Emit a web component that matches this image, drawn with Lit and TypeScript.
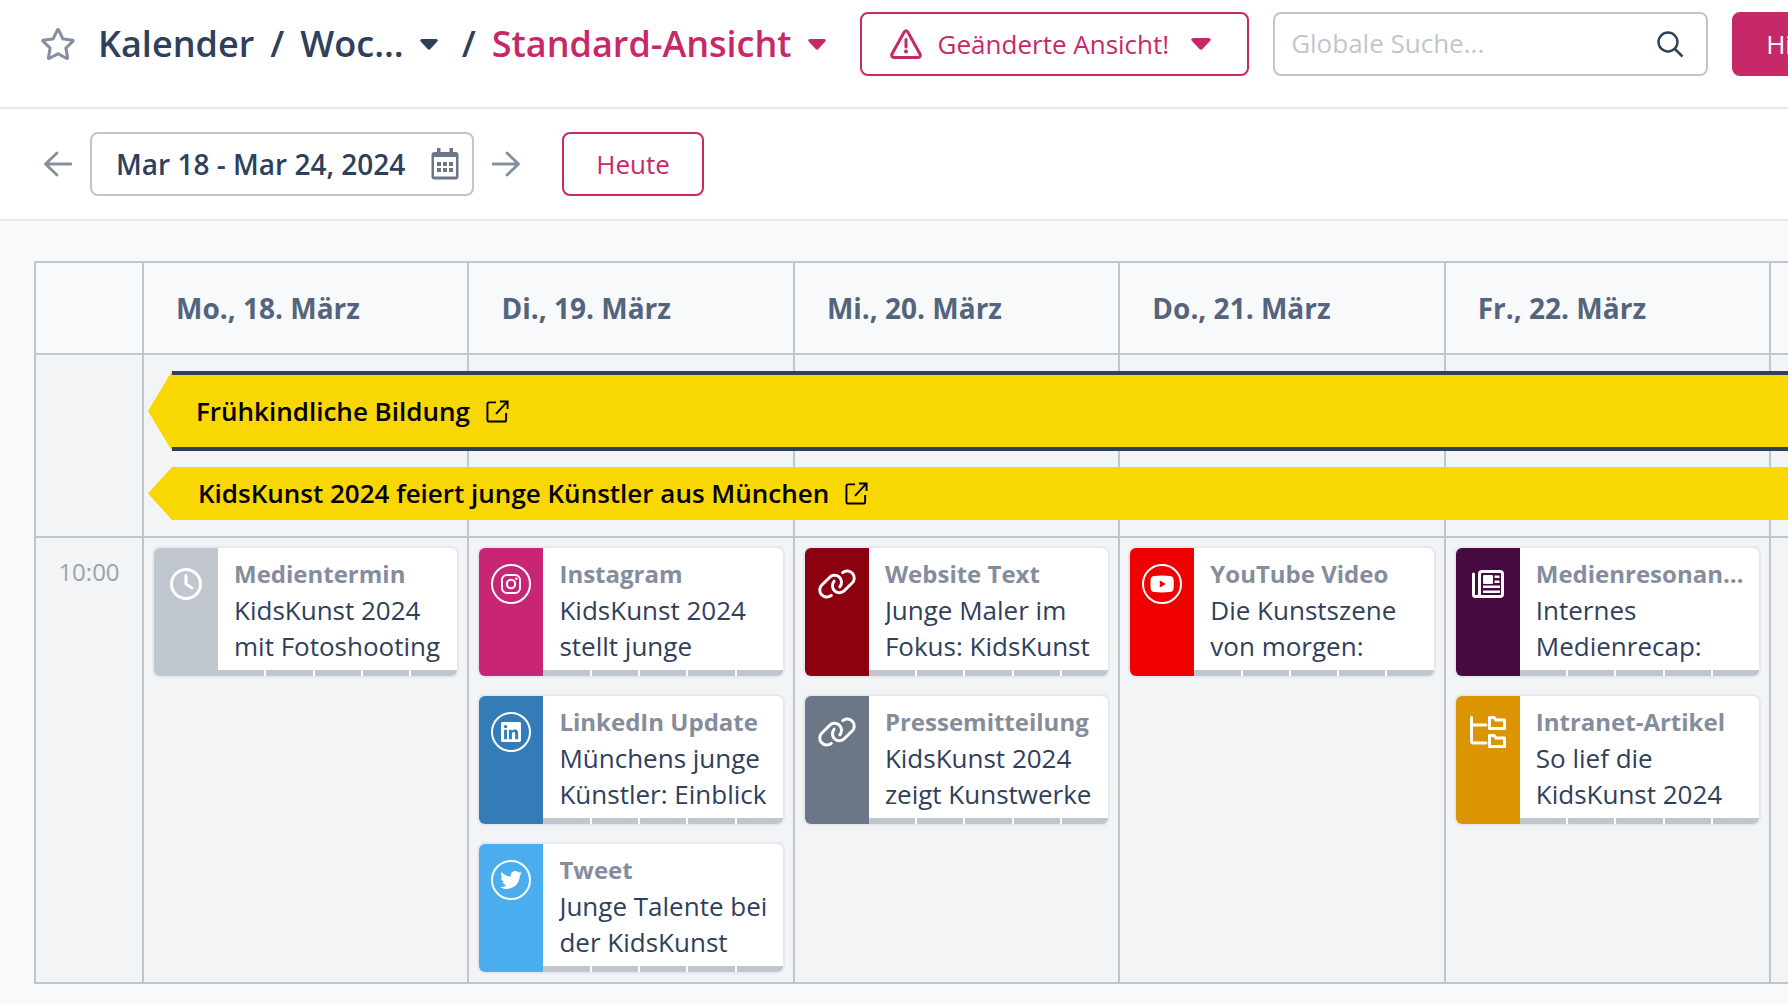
import { LitElement, html, css, svg, type TemplateResult, type SVGTemplateResult } from "lit";
import { customElement, property } from "lit/decorators.js";
import { classMap } from "lit/directives/class-map.js";

type Kind =
  | "clock"
  | "instagram"
  | "linkedin"
  | "twitter"
  | "link"
  | "youtube"
  | "news"
  | "tree";

interface Entry {
  tone: string;
  icon: Kind;
  channel: string;
  title: string;
}

interface Day {
  label: string;
  entries: Entry[];
}

interface Campaign {
  title: string;
  framed: boolean;
}

const days: Day[] = [
  {
    label: "Mo., 18. März",
    entries: [
      { tone: "grey", icon: "clock", channel: "Medientermin", title: "KidsKunst 2024 mit Fotoshooting" },
    ],
  },
  {
    label: "Di., 19. März",
    entries: [
      { tone: "pink", icon: "instagram", channel: "Instagram", title: "KidsKunst 2024 stellt junge" },
      { tone: "blue", icon: "linkedin", channel: "LinkedIn Update", title: "Münchens junge Künstler: Einblick" },
      { tone: "sky", icon: "twitter", channel: "Tweet", title: "Junge Talente bei der KidsKunst" },
    ],
  },
  {
    label: "Mi., 20. März",
    entries: [
      { tone: "wine", icon: "link", channel: "Website Text", title: "Junge Maler im Fokus: KidsKunst" },
      { tone: "slate", icon: "link", channel: "Pressemitteilung", title: "KidsKunst 2024 zeigt Kunstwerke" },
    ],
  },
  {
    label: "Do., 21. März",
    entries: [
      { tone: "red", icon: "youtube", channel: "YouTube Video", title: "Die Kunstszene von morgen:" },
    ],
  },
  {
    label: "Fr., 22. März",
    entries: [
      { tone: "plum", icon: "news", channel: "Medienresonanzanalyse", title: "Internes Medienrecap:" },
      { tone: "amber", icon: "tree", channel: "Intranet-Artikel", title: "So lief die KidsKunst 2024" },
    ],
  },
  { label: "Sa., 23. März", entries: [] },
  { label: "So., 24. März", entries: [] },
];

const campaigns: Campaign[] = [
  { title: "Frühkindliche Bildung", framed: true },
  { title: "KidsKunst 2024 feiert junge Künstler aus München", framed: false },
];

const ring = svg`<circle cx="20" cy="20" r="19" fill="none" stroke="currentColor" stroke-width="2"/>`;

const glyphs: Record<Kind, SVGTemplateResult> = {
  clock: svg`
    <circle cx="20" cy="20" r="14.5" fill="none" stroke="currentColor" stroke-width="3"/>
    <path d="M20 11.5V20l6 4" fill="none" stroke="currentColor" stroke-width="3" stroke-linecap="round" stroke-linejoin="round"/>`,
  instagram: svg`${ring}
    <rect x="11" y="11" width="18" height="18" rx="5" fill="none" stroke="currentColor" stroke-width="2"/>
    <circle cx="20" cy="20" r="4.2" fill="none" stroke="currentColor" stroke-width="2"/>
    <circle cx="25.3" cy="14.7" r="1.3" fill="currentColor"/>`,
  linkedin: svg`${ring}
    <path transform="translate(10 8.6) scale(.04464)" fill="currentColor" d="M416 32H31.9C14.3 32 0 46.5 0 64.3v383.4C0 465.5 14.3 480 31.9 480H416c17.6 0 32-14.5 32-32.3V64.3c0-17.8-14.4-32.3-32-32.3zM135.4 416H69V202.2h66.5V416zm-33.2-243c-21.3 0-38.5-17.3-38.5-38.5S80.9 96 102.2 96c21.2 0 38.5 17.3 38.5 38.5 0 21.3-17.2 38.5-38.5 38.5zm282.1 243h-66.4V312c0-24.8-.5-56.7-34.5-56.7-34.6 0-39.9 27-39.9 54.9V416h-66.4V202.2h63.7v29.2h.9c8.9-16.8 30.6-34.5 62.9-34.5 67.2 0 79.7 44.3 79.7 101.9V416z"/>`,
  twitter: svg`${ring}
    <path transform="translate(9 9) scale(.04297)" fill="currentColor" d="M459.37 151.716c.325 4.548.325 9.097.325 13.645 0 138.72-105.583 298.558-298.558 298.558-59.452 0-114.68-17.219-161.137-47.106 8.447.974 16.568 1.299 25.34 1.299 49.055 0 94.213-16.568 130.274-44.832-46.132-.975-84.792-31.188-98.112-72.772 6.498.974 12.995 1.624 19.818 1.624 9.421 0 18.843-1.3 27.614-3.573-48.081-9.747-84.143-51.98-84.143-102.985v-1.299c13.969 7.797 30.214 12.67 47.431 13.319-28.264-18.843-46.781-51.005-46.781-87.391 0-19.492 5.197-37.36 14.294-52.954 51.655 63.675 129.3 105.258 216.365 109.807-1.624-7.797-2.599-15.918-2.599-24.04 0-57.828 46.782-104.934 104.934-104.934 30.213 0 57.502 12.67 76.67 33.137 23.715-4.548 46.456-13.32 66.599-25.34-7.798 24.366-24.366 44.833-46.132 57.827 21.117-2.273 41.584-8.122 60.426-16.243-14.292 20.791-32.161 39.308-52.628 54.253z"/>`,
  youtube: svg`${ring}
    <path fill="currentColor" fill-rule="evenodd" d="M12 12Q20 11.2 28 12Q31.2 12.3 31.6 15.5Q32 20 31.6 24.6Q31.2 27.8 28 28.1Q20 28.8 12 28.1Q9 27.8 8.6 24.6Q8.2 20 8.6 15.5Q9 12.3 12 12ZM17.8 16.6V23.4L23.8 20Z"/>`,
  link: svg`
    <g fill="none" stroke="currentColor" stroke-width="48" stroke-linecap="round" transform="translate(0 4) scale(.0625)">
      <path d="M411 74A112 112 0 0 1 556.7 244.7L444.4 356.9A112 112 0 0 1 274 211"/>
      <path d="M229 438A112 112 0 0 1 83.3 267.3L195.6 155.1A112 112 0 0 1 366 301"/>
    </g>`,
  news: svg`
    <path d="M5.5 10V30.5Q5.5 32.5 7.5 32.5H32Q34.5 32.5 34.5 30V10Q34.5 7.5 32 7.5H14Q11.5 7.5 11.5 10V30Q11.5 32.5 9 32.5" fill="none" stroke="currentColor" stroke-width="3" stroke-linecap="round" stroke-linejoin="round"/>
    <path fill="currentColor" d="M16 11h8q1 0 1 1v7q0 1-1 1h-8q-1 0-1-1v-7q0-1 1-1zM26.5 11.5h5v2.5h-5zM26.5 16.5h5v2.5h-5zM15 21.5h17v2.5H15zM15 26.5h17v2.5H15z"/>`,
  tree: svg`
    <path d="M3.5 5.5V29Q3.5 31 5.5 31H18M3.5 13H18" fill="none" stroke="currentColor" stroke-width="3" stroke-linecap="round"/>
    <path d="M21.5 5.5H26L28 8H36.5V16.5H21.5ZM21.5 23.5H26L28 26H36.5V34.5H21.5Z" fill="none" stroke="currentColor" stroke-width="3" stroke-linejoin="round"/>`,
};

const caret = html`<svg class="caret" viewBox="0 0 20 12" aria-hidden="true">
  <path fill="currentColor" d="M2 0H18Q21 1 19 3L11.5 11Q10 12.4 8.5 11L1 3Q-1 1 2 0Z" />
</svg>`;

const external = html`<svg class="external" viewBox="0 0 24 24" aria-hidden="true">
  <path
    d="M10.5 2.5H3.5Q1.5 2.5 1.5 4.5V20.5Q1.5 22.5 3.5 22.5H19Q21 22.5 21 20.5V13.5M14.5 1.5H22.5V9.5M22 2L10.5 14.5"
    fill="none"
    stroke="currentColor"
    stroke-width="2"
  />
</svg>`;

@customElement("calendar-card")
export class CalendarCard extends LitElement {
  @property({ attribute: false }) entry!: Entry;

  static styles = css`
    :host {
      display: block;
    }
    .card {
      display: flex;
      overflow: hidden;
      border: 2px solid #e5e8ee;
      border-radius: 8px;
      background: #fff;
    }
    .strip {
      flex: none;
      width: 64px;
      display: flex;
      justify-content: center;
      padding-top: 16px;
      box-sizing: border-box;
      color: #fff;
    }
    .strip svg {
      width: 40px;
      height: 40px;
    }
    .grey { background: #bfc6ce; }
    .pink { background: #c92575; }
    .blue { background: #347cb8; }
    .sky { background: #4aadee; }
    .wine { background: #8b0110; }
    .slate { background: #6b7686; }
    .red { background: #f00000; }
    .plum { background: #470a40; }
    .amber { background: #dc9502; }
    .main {
      flex: 1;
      min-width: 0;
    }
    .text {
      padding: 8px 12px 6px 16px;
    }
    .channel {
      margin: 0;
      color: #858d9d;
      font-size: 24px;
      font-weight: 700;
      line-height: 36px;
      white-space: nowrap;
      overflow: hidden;
      text-overflow: ellipsis;
    }
    .title {
      margin: 0;
      color: #2f405c;
      font-size: 26px;
      line-height: 36px;
      height: 72px;
      overflow: hidden;
    }
    .steps {
      display: grid;
      grid-template-columns: repeat(5, 1fr);
      gap: 2px;
      height: 6px;
    }
    .step {
      background: #bfc6ce;
    }
  `;

  render() {
    const e = this.entry;
    return html`<article class="card">
      <div class=${classMap({ strip: true, [e.tone]: true })}>
        <svg viewBox="0 0 40 40" aria-hidden="true">${glyphs[e.icon]}</svg>
      </div>
      <div class="main">
        <div class="text">
          <h3 class="channel">${e.channel}</h3>
          <p class="title">${e.title}</p>
        </div>
        <div class="steps">${[0, 1, 2, 3, 4].map(() => html`<span class="step"></span>`)}</div>
      </div>
    </article>`;
  }
}

@customElement("week-table")
export class WeekTable extends LitElement {
  static styles = css`
    :host {
      display: block;
      overflow: hidden;
    }
    .week {
      width: 136.04%;
      table-layout: fixed;
      border-collapse: separate;
      border-spacing: 0;
      border-top: 2px solid #bec6ce;
    }
    .hours {
      width: 108px;
    }
    .cell {
      border-left: 2px solid #bec6ce;
      border-bottom: 2px solid #bec6ce;
      padding: 0;
      vertical-align: top;
      background: #f3f4f6;
      text-align: left;
      font-weight: 400;
    }
    .head {
      background: #f8f9fb;
      padding: 27px 32px;
      color: #54647c;
      font-size: 28px;
      font-weight: 700;
      line-height: 36px;
      white-space: nowrap;
    }
    .hour {
      padding-top: 16px;
      color: #9aa2ae;
      font-size: 24px;
      line-height: 36px;
      text-align: center;
    }
    .campaigns {
      position: relative;
      z-index: 1;
      display: flex;
      flex-direction: column;
      gap: 16px;
      width: 700%;
      padding: 16px 0 16px 4px;
    }
    .bar {
      display: flex;
    }
    .tip {
      width: 24px;
      background: #f8d703;
      clip-path: polygon(100% 0, 0 50%, 100% 100%);
    }
    .body {
      flex: 1;
      display: flex;
      align-items: center;
      padding: 0 26px 1px;
      height: 52px;
      background: #f8d703;
    }
    .framed {
      padding: 0 24px;
      height: 72px;
      border-top: 4px solid #2f405c;
      border-bottom: 4px solid #2f405c;
    }
    .campaign {
      display: flex;
      align-items: center;
      gap: 16px;
      color: #000;
      font-size: 26px;
      font-weight: 600;
      line-height: 36px;
      text-decoration: none;
    }
    .external {
      width: 23px;
      height: 23px;
    }
    .entries {
      display: flex;
      flex-direction: column;
      gap: 16px;
      padding: 8px;
    }
  `;

  private campaign(c: Campaign): TemplateResult {
    return html`<div class="bar">
      <span class="tip"></span>
      <div class=${classMap({ body: true, framed: c.framed })}>
        <a class="campaign" href="#">${c.title}${external}</a>
      </div>
    </div>`;
  }

  render() {
    return html`<table class="week">
      <colgroup>
        <col class="hours" />
        <col span="7" />
      </colgroup>
      <thead>
        <tr>
          <td class="cell head"></td>
          ${days.map((d) => html`<th class="cell head" scope="col">${d.label}</th>`)}
        </tr>
      </thead>
      <tbody>
        <tr>
          <td class="cell"></td>
          ${days.map(
            (_, i) => html`<td class="cell">
              ${i === 0 ? html`<div class="campaigns">${campaigns.map((c) => this.campaign(c))}</div>` : ""}
            </td>`,
          )}
        </tr>
        <tr>
          <th class="cell hour" scope="row">10:00</th>
          ${days.map(
            (d) => html`<td class="cell">
              <div class="entries">
                ${d.entries.map((e) => html`<calendar-card .entry=${e}></calendar-card>`)}
              </div>
            </td>`,
          )}
        </tr>
      </tbody>
    </table>`;
  }
}

@customElement("app-root")
export class AppRoot extends LitElement {
  static styles = css`
    :host {
      display: block;
      min-height: 100vh;
      overflow: hidden;
      box-sizing: border-box;
      background: #f8f9fb;
      color: #2f405c;
      font-family: "Open Sans", "Noto Sans", sans-serif;
    }
    button,
    input {
      font: inherit;
      color: inherit;
      background: none;
      border: 0;
      padding: 0;
      margin: 0;
    }
    button {
      cursor: pointer;
      flex: none;
      white-space: nowrap;
    }
    svg {
      display: block;
      flex: none;
    }
    .top,
    .tools {
      display: flex;
      align-items: center;
      background: #fff;
      border-bottom: 2px solid #e5e8ee;
    }
    .top {
      gap: 24px;
      padding: 12px 40px 31px;
    }
    .tools {
      gap: 18px;
      padding: 23px 40px;
    }
    .crumbs {
      flex: none;
      display: flex;
      align-items: center;
      gap: 16px;
      margin-right: 10px;
      font-size: 36px;
      font-weight: 600;
      line-height: 48px;
    }
    .star {
      color: #858fa0;
      margin-right: 6px;
    }
    .star svg {
      width: 36px;
      height: 32px;
    }
    .crumb {
      display: flex;
      align-items: center;
      gap: 16px;
      color: inherit;
      text-decoration: none;
    }
    .crumb .caret {
      width: 18px;
      height: 11px;
    }
    .board {
      margin-right: 8px;
    }
    .view {
      color: #c62868;
    }
    .caret {
      width: 20px;
      height: 12px;
    }
    .btn {
      display: flex;
      align-items: center;
      gap: 16px;
      height: 64px;
      padding: 0 32px;
      border: 2px solid #c62868;
      border-radius: 8px;
      color: #c62868;
      font-size: 26px;
      line-height: 36px;
    }
    .changed {
      padding: 0 36px 0 28px;
    }
    .changed .caret {
      margin-left: 6px;
    }
    .warn {
      width: 32px;
      height: 30px;
    }
    .solid {
      background: #c62868;
      color: #fff;
    }
    .search,
    .range {
      display: flex;
      align-items: center;
      box-sizing: border-box;
      height: 64px;
      border: 2px solid #bec6ce;
      border-radius: 8px;
      background: #fff;
    }
    .search {
      flex: none;
      width: 435px;
      padding: 0 22px 0 16px;
    }
    .query {
      flex: 1;
      min-width: 0;
      padding-bottom: 2px;
      font-size: 26px;
      line-height: 36px;
      outline: 0;
    }
    .query::placeholder {
      color: #bfc6ce;
      opacity: 1;
    }
    .search svg {
      width: 28px;
      height: 28px;
    }
    .step {
      color: #858fa0;
    }
    .step svg {
      width: 32px;
      height: 28px;
    }
    .range {
      gap: 24px;
      padding: 0 11px 0 24px;
      font-size: 28px;
      font-weight: 600;
      line-height: 36px;
    }
    .range svg {
      width: 32px;
      height: 32px;
      color: #6b7686;
    }
    .today {
      margin-left: 20px;
    }
    .calendar {
      padding: 40px 0 20px 34px;
    }
  `;

  render() {
    return html`
      <header class="top">
        <nav class="crumbs" aria-label="Navigation">
          <button class="star" aria-label="Favorit">
            <svg viewBox="0 0 576 512">
              <path
                fill="currentColor"
                d="M528.1 171.5L382 150.2 316.7 17.8c-11.7-23.6-45.6-23.9-57.4 0L194 150.2 47.9 171.5c-26.2 3.8-36.7 36.1-17.7 54.6l105.7 103-25 145.5c-4.5 26.3 23.2 46 46.4 33.7L288 439.6l130.7 68.7c23.2 12.2 50.9-7.4 46.4-33.7l-25-145.5 105.7-103c19-18.5 8.5-50.8-17.7-54.6zM388.6 312.3l23.7 138.4L288 385.4l-124.3 65.3 23.7-138.4-100.6-98 139-20.2 62.2-126 62.2 126 139 20.2-100.6 98z"
              />
            </svg>
          </button>
          <a class="crumb" href="#">Kalender</a>
          <span>/</span>
          <button class="crumb board">Woc... ${caret}</button>
          <span>/</span>
          <button class="crumb view">Standard-Ansicht ${caret}</button>
        </nav>
        <button class="btn changed">
          <svg class="warn" viewBox="0 0 32 30" aria-hidden="true">
            <path
              d="M14.2 3Q16 .4 17.8 3L30 25Q31 28.3 28 28.5H4Q1 28.3 2 25Z"
              fill="none"
              stroke="currentColor"
              stroke-width="3"
              stroke-linejoin="round"
            />
            <path d="M16 10.5V18" stroke="currentColor" stroke-width="3" stroke-linecap="round" />
            <circle cx="16" cy="22.5" r="2" fill="currentColor" />
          </svg>
          Geänderte Ansicht! ${caret}
        </button>
        <label class="search">
          <input class="query" type="text" placeholder="Globale Suche..." aria-label="Globale Suche" />
          <svg viewBox="0 0 28 28" aria-hidden="true">
            <circle cx="12" cy="12" r="9.5" fill="none" stroke="currentColor" stroke-width="2.4" />
            <path d="M18.8 18.8L26.5 26.5" stroke="currentColor" stroke-width="2.6" />
          </svg>
        </label>
        <button class="btn solid">Hinzufügen</button>
      </header>
      <div class="tools">
        <button class="step" aria-label="Vorherige Woche">
          <svg viewBox="0 0 32 28">
            <path
              d="M17 3L5.5 14L17 25M5.5 14H31"
              fill="none"
              stroke="currentColor"
              stroke-width="2.8"
              stroke-linecap="round"
              stroke-linejoin="round"
            />
          </svg>
        </button>
        <button class="range">
          Mar 18 - Mar 24, 2024
          <svg viewBox="0 0 32 32" aria-hidden="true">
            <path
              fill="currentColor"
              fill-rule="evenodd"
              d="M8 0h3.5v4h9V0H24v4h2.5q3 0 3 3v21.5q0 3-3 3h-21q-3 0-3-3V7q0-3 3-3H8zM5 9v19.5h22V9z"
            />
            <path
              fill="currentColor"
              d="M8 14h4v4H8zM14 14h4v4h-4zM20 14h4v4h-4zM8 20h4v4H8zM14 20h4v4h-4zM20 20h4v4h-4z"
            />
          </svg>
        </button>
        <button class="step" aria-label="Nächste Woche">
          <svg viewBox="0 0 32 28">
            <path
              d="M15 3L26.5 14L15 25M26.5 14H1"
              fill="none"
              stroke="currentColor"
              stroke-width="2.8"
              stroke-linecap="round"
              stroke-linejoin="round"
            />
          </svg>
        </button>
        <button class="btn today">Heute</button>
      </div>
      <main class="calendar"><week-table></week-table></main>
    `;
  }
}
